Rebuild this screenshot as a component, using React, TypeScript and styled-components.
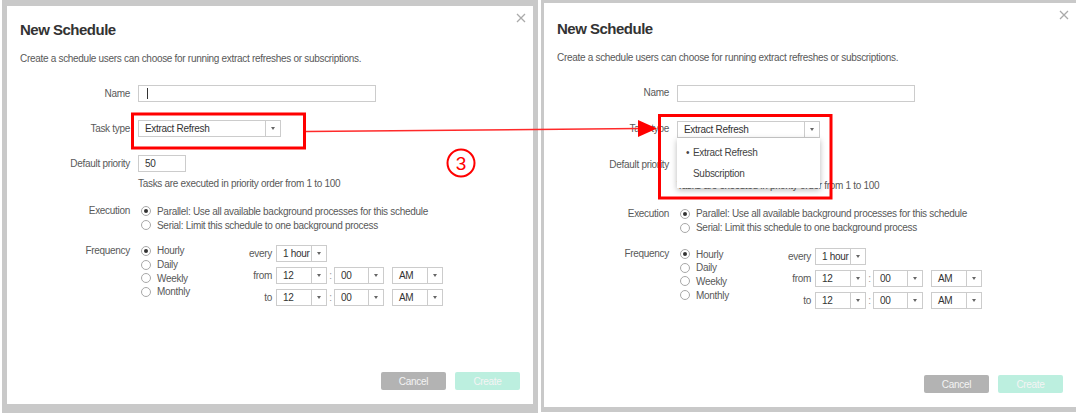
import React from "react";
import styled, { createGlobalStyle } from "styled-components";

const GlobalStyle = createGlobalStyle`
  html, body {
    margin: 0;
    background: #ffffff;
  }
  body {
    font-family: "Liberation Sans", Arial, sans-serif;
  }
`;

const Stage = styled.div`
  position: relative;
  display: flex;
  gap: 3px;
  width: 1080px;
  height: 417px;
  padding-left: 2px;
  box-sizing: border-box;
  overflow: hidden;
`;

const Frame = styled.div<{ $w: number; $h: number; $pad: string }>`
  display: flex;
  width: ${(p) => p.$w}px;
  height: ${(p) => p.$h}px;
  padding: ${(p) => p.$pad};
  box-sizing: border-box;
  background: #c9c9c9;
`;

const Dialog = styled.div<{ $top: number }>`
  position: relative;
  flex: 1;
  display: flex;
  flex-direction: column;
  background: #ffffff;
  padding: ${(p) => p.$top}px 13px 14px 13px;
  font-size: 10px;
  letter-spacing: -0.3px;
  color: #595959;
`;

const Close = styled.svg`
  position: absolute;
  top: 7px;
  right: 7px;
`;

const Title = styled.h1`
  margin: 0;
  font-size: 15px;
  line-height: 18px;
  font-weight: 700;
  letter-spacing: -0.5px;
  color: #333;
`;

const Description = styled.p`
  margin: 13px 0 0;
  line-height: 14px;
`;

const Row = styled.div<{ $mt: number; $align?: string }>`
  display: flex;
  align-items: ${(p) => p.$align ?? "center"};
  gap: 8px;
  margin-top: ${(p) => p.$mt}px;
`;

const Label = styled.div<{ $w: number; $lh?: number }>`
  width: ${(p) => p.$w}px;
  flex: none;
  text-align: right;
  line-height: ${(p) => p.$lh ?? 14}px;
`;

const Box = styled.div<{ $w: number }>`
  position: relative;
  display: flex;
  align-items: center;
  width: ${(p) => p.$w}px;
  height: 17px;
  flex: none;
  box-sizing: border-box;
  border: 1px solid #cccccc;
  background: #fff;
  color: #333;
`;

const BoxText = styled.span`
  flex: 1;
  padding-left: 6px;
  white-space: nowrap;
`;

const Caret = styled.span`
  width: 1px;
  height: 11px;
  margin-left: 8px;
  background: #333;
`;

const Arrow = styled.span`
  display: flex;
  align-items: center;
  justify-content: center;
  width: 14px;
  height: 100%;
  border-left: 1px solid #cccccc;
  &::after {
    content: "";
    border-left: 2.5px solid transparent;
    border-right: 2.5px solid transparent;
    border-top: 3px solid #666;
  }
`;

const Menu = styled.ul`
  position: absolute;
  top: 100%;
  left: -1px;
  right: -1px;
  margin: 1px 0 0;
  padding: 4px 0;
  list-style: none;
  background: #fff;
  box-shadow: 0 2px 6px rgba(0, 0, 0, 0.28);
  z-index: 2;
`;

const MenuItem = styled.li<{ $selected?: boolean }>`
  position: relative;
  height: 21px;
  line-height: 21px;
  padding-left: 16px;
  color: #444;
  &::before {
    content: ${(p) => (p.$selected ? '"•"' : '""')};
    position: absolute;
    left: 9px;
  }
`;

const Help = styled.div<{ $indent: number; $mt: number }>`
  margin: ${(p) => p.$mt}px 0 0 ${(p) => p.$indent}px;
  line-height: 13px;
`;

const Options = styled.div<{ $w?: number }>`
  display: flex;
  flex-direction: column;
  width: ${(p) => (p.$w ? `${p.$w}px` : "auto")};
  flex: none;
`;

const Option = styled.div<{ $lh: number }>`
  display: flex;
  align-items: center;
  gap: 6px;
  height: ${(p) => p.$lh}px;
  padding-left: 3px;
`;

const Radio = styled.span<{ $checked?: boolean }>`
  display: flex;
  align-items: center;
  justify-content: center;
  width: 10px;
  height: 10px;
  box-sizing: border-box;
  border: 1px solid #a8a8a8;
  border-radius: 50%;
  &::after {
    content: "";
    width: 4px;
    height: 4px;
    border-radius: 50%;
    background: ${(p) => (p.$checked ? "#333" : "transparent")};
  }
`;

const TimeGrid = styled.div`
  display: grid;
  grid-template-columns: 36px auto;
  column-gap: 4px;
  row-gap: 5px;
  margin-top: 1px;
  align-items: center;
`;

const TimeLabel = styled.span`
  text-align: right;
`;

const TimeRow = styled.div`
  display: flex;
  align-items: center;
`;

const Colon = styled.span`
  width: 7px;
  text-align: center;
  color: #999;
`;

const Spacer = styled.span`
  width: 8px;
`;

const Footer = styled.div`
  display: flex;
  justify-content: flex-end;
  gap: 9px;
  margin-top: auto;
`;

const Button = styled.button<{ $variant: "cancel" | "create" }>`
  width: 65px;
  height: 18px;
  padding: 0;
  border: none;
  border-radius: 2px;
  font: inherit;
  letter-spacing: -0.3px;
  color: #f4f4f4;
  background: ${(p) => (p.$variant === "cancel" ? "#b3b3b3" : "#bcefdf")};
`;

const Overlay = styled.svg`
  position: absolute;
  top: 0;
  left: 0;
  pointer-events: none;
`;

function Select({
  w,
  value,
  children,
}: {
  w: number;
  value: string;
  children?: React.ReactNode;
}) {
  return (
    <Box $w={w}>
      <BoxText>{value}</BoxText>
      <Arrow />
      {children}
    </Box>
  );
}

function Time({ label, hour }: { label: string; hour: string }) {
  return (
    <>
      <TimeLabel>{label}</TimeLabel>
      <TimeRow>
        <Select w={51} value={hour} />
        <Colon>:</Colon>
        <Select w={50} value="00" />
        <Spacer />
        <Select w={51} value="AM" />
      </TimeRow>
    </>
  );
}

type DialogProps = {
  open?: boolean;
  caret?: boolean;
  k?: number;
  top?: number;
  labelW?: number;
};

function ScheduleDialog({ open, caret, k = 1, top = 15, labelW = 110 }: DialogProps) {
  return (
    <Dialog $top={top}>
      <Close width={10} height={10} viewBox="0 0 10 10">
        <path d="M1 1 L9 9 M9 1 L1 9" stroke="#aaaaaa" strokeWidth={1.3} />
      </Close>
      <Title>New Schedule</Title>
      <Description>
        Create a schedule users can choose for running extract refreshes or
        subscriptions.
      </Description>

      <Row $mt={19 * k}>
        <Label $w={labelW}>Name</Label>
        <Box $w={238}>{caret && <Caret />}</Box>
      </Row>

      <Row $mt={18 * k}>
        <Label $w={labelW}>Task type</Label>
        <Select w={143} value="Extract Refresh">
          {open && (
            <Menu>
              <MenuItem $selected>Extract Refresh</MenuItem>
              <MenuItem>Subscription</MenuItem>
            </Menu>
          )}
        </Select>
      </Row>

      <Row $mt={18 * k}>
        <Label $w={labelW}>Default priority</Label>
        <Box $w={48}>
          <BoxText>50</BoxText>
        </Box>
      </Row>
      <Help $indent={labelW + 8} $mt={5 * k}>
        Tasks are executed in priority order from 1 to 100
      </Help>

      <Row $mt={14 * k} $align="flex-start">
        <Label $w={labelW}>Execution</Label>
        <Options>
          <Option $lh={14}>
            <Radio $checked />
            Parallel: Use all available background processes for this schedule
          </Option>
          <Option $lh={14}>
            <Radio />
            Serial: Limit this schedule to one background process
          </Option>
        </Options>
      </Row>

      <Row $mt={12 * k} $align="flex-start">
        <Label $w={labelW} $lh={13.7}>
          Frequency
        </Label>
        <Options $w={90}>
          <Option $lh={13.7}>
            <Radio $checked />
            Hourly
          </Option>
          <Option $lh={13.7}>
            <Radio />
            Daily
          </Option>
          <Option $lh={13.7}>
            <Radio />
            Weekly
          </Option>
          <Option $lh={13.7}>
            <Radio />
            Monthly
          </Option>
        </Options>
        <TimeGrid>
          <TimeLabel>every</TimeLabel>
          <TimeRow>
            <Select w={51} value="1 hour" />
          </TimeRow>
          <Time label="from" hour="12" />
          <Time label="to" hour="12" />
        </TimeGrid>
      </Row>

      <Footer>
        <Button $variant="cancel">Cancel</Button>
        <Button $variant="create">Create</Button>
      </Footer>
    </Dialog>
  );
}

export default function App() {
  return (
    <>
      <GlobalStyle />
      <Stage>
        <Frame $w={536} $h={413} $pad="6px 5px 9px 5px">
          <ScheduleDialog caret />
        </Frame>
        <Frame $w={535} $h={412} $pad="3px 0 5px 3px">
          <ScheduleDialog open k={1.05} top={17} labelW={112} />
        </Frame>
        <Overlay width={1080} height={417}>
          <g fill="none" stroke="#ff0000" strokeWidth={3}>
            <rect x={132.5} y={114} width={172} height={34} />
            <rect x={659.5} y={115.5} width={171.5} height={82.5} />
          </g>
          <line
            x1={306}
            y1={131.5}
            x2={640}
            y2={128.5}
            stroke="#ff2a2a"
            strokeWidth={1.5}
          />
          <polygon points="638,120 657,128.5 638,137" fill="#ff0000" />
          <circle
            cx={461}
            cy={163}
            r={13.5}
            fill="#fff"
            stroke="#ff0000"
            strokeWidth={2}
          />
          <text
            x={461}
            y={169.5}
            textAnchor="middle"
            fontSize={19}
            fontFamily="Liberation Sans, Arial, sans-serif"
            fill="#ff0000"
          >
            3
          </text>
        </Overlay>
      </Stage>
    </>
  );
}
